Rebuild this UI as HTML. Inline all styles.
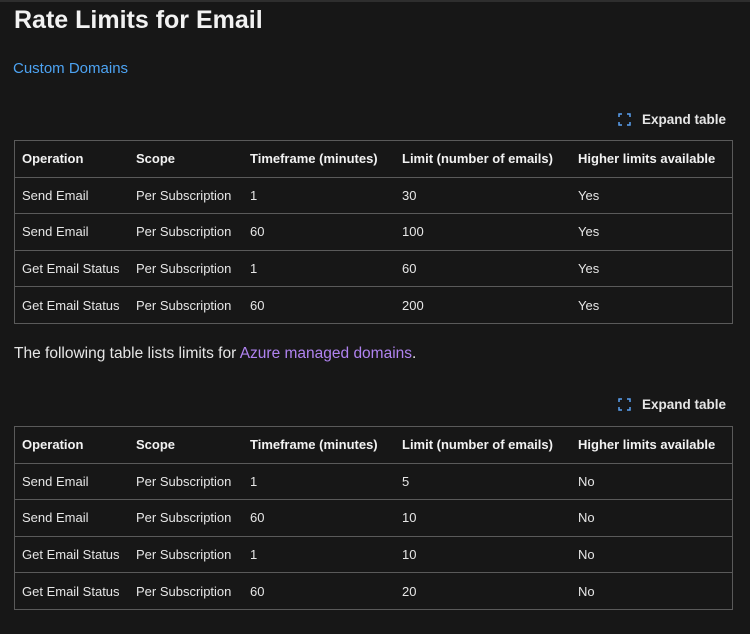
<!DOCTYPE html>
<html><head><style>
body{margin:0;background:#171717;color:#e6e6e6;font-family:"Liberation Sans",sans-serif;width:750px;height:634px;overflow:hidden;border-top:2px solid #2e2e2e;box-sizing:border-box;position:relative}
h1{position:absolute;left:14px;top:4px;margin:0;font-size:25px;font-weight:bold;color:#f2f2f2}
.a{position:absolute;left:13px;top:58px;font-size:15px;color:#4da3f2}
.exp{position:absolute;left:618px;font-size:13.5px;font-weight:bold;color:#e6e6e6}
.exp svg{vertical-align:-2px;margin-right:11px}
table{position:absolute;left:14px;width:719px;border-collapse:collapse;border:1px solid #5a5a5a;font-size:13px}
td,th{text-align:left;padding:0 7px;height:35.6px;border-top:1px solid #5a5a5a;white-space:nowrap}
th{font-weight:bold;color:#f2f2f2}
.p{position:absolute;left:14px;top:343px;font-size:15.5px}
.p a{color:#b083f0}
</style></head><body>
<h1>Rate Limits for Email</h1>
<div class="a">Custom Domains</div>
<div class="exp" style="top:110px"><svg width="13" height="13" viewBox="0 0 13 13" fill="none" stroke="#5aa0f0" stroke-width="1.5"><path d="M1 4V1H4M9 1H12V4M12 9V12H9M4 12H1V9"/></svg>Expand table</div>
<table style="top:138px">
<tr><th style="width:100px">Operation</th><th style="width:100px">Scope</th><th style="width:138px">Timeframe (minutes)</th><th style="width:162px">Limit (number of emails)</th><th>Higher limits available</th></tr>
<tr><td>Send Email</td><td>Per Subscription</td><td>1</td><td>30</td><td>Yes</td></tr>
<tr><td>Send Email</td><td>Per Subscription</td><td>60</td><td>100</td><td>Yes</td></tr>
<tr><td>Get Email Status</td><td>Per Subscription</td><td>1</td><td>60</td><td>Yes</td></tr>
<tr><td>Get Email Status</td><td>Per Subscription</td><td>60</td><td>200</td><td>Yes</td></tr>
</table>
<div class="p">The following table lists limits for <a>Azure managed domains</a>.</div>
<div class="exp" style="top:395px"><svg width="13" height="13" viewBox="0 0 13 13" fill="none" stroke="#5aa0f0" stroke-width="1.5"><path d="M1 4V1H4M9 1H12V4M12 9V12H9M4 12H1V9"/></svg>Expand table</div>
<table style="top:424px">
<tr><th style="width:100px">Operation</th><th style="width:100px">Scope</th><th style="width:138px">Timeframe (minutes)</th><th style="width:162px">Limit (number of emails)</th><th>Higher limits available</th></tr>
<tr><td>Send Email</td><td>Per Subscription</td><td>1</td><td>5</td><td>No</td></tr>
<tr><td>Send Email</td><td>Per Subscription</td><td>60</td><td>10</td><td>No</td></tr>
<tr><td>Get Email Status</td><td>Per Subscription</td><td>1</td><td>10</td><td>No</td></tr>
<tr><td>Get Email Status</td><td>Per Subscription</td><td>60</td><td>20</td><td>No</td></tr>
</table>
</body></html>
